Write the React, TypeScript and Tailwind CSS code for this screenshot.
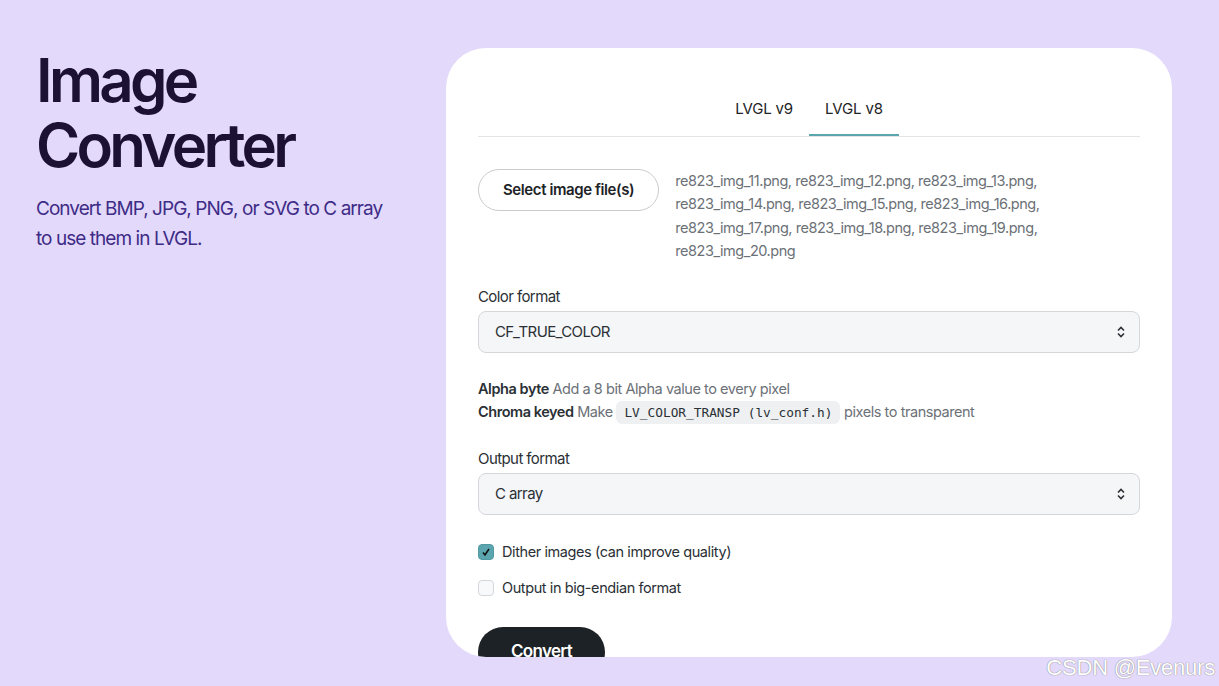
import { useState } from "react";

const FILES = [
  "re823_img_11.png",
  "re823_img_12.png",
  "re823_img_13.png",
  "re823_img_14.png",
  "re823_img_15.png",
  "re823_img_16.png",
  "re823_img_17.png",
  "re823_img_18.png",
  "re823_img_19.png",
  "re823_img_20.png",
];

type Version = "v9" | "v8";

export default function App() {
  const [version, setVersion] = useState<Version>("v8");
  const [dither, setDither] = useState(true);
  const [bigEndian, setBigEndian] = useState(false);

  return (
    <div
      className="relative flex h-[686px] overflow-hidden bg-[#e3d9fb] pt-[48px] pl-[36px]"
      style={{ fontFamily: "Inter, 'Noto Sans', sans-serif" }}
    >
      <div className="w-[360px] shrink-0">
        <h1 className="text-[60px] font-semibold leading-[65px] tracking-[-0.062em] text-[#1c1133]">
          Image
          <br />
          Converter
        </h1>
        <p className="mt-4 text-[19px] leading-[30px] tracking-[-0.05em] text-[#3e2c86]">
          Convert BMP, JPG, PNG, or SVG to C array to use them in LVGL.
        </p>
      </div>

      <div className="ml-[50px] h-[609px] w-[726px] shrink-0 overflow-hidden rounded-[40px] bg-white px-8 pt-8">
        <div className="flex justify-center border-b border-[#e2e4e8]">
          <TabButton active={version === "v9"} onClick={() => setVersion("v9")}>
            LVGL v9
          </TabButton>
          <TabButton active={version === "v8"} onClick={() => setVersion("v8")}>
            LVGL v8
          </TabButton>
        </div>

        <div className="mt-8 flex items-start gap-4">
          <button className="shrink-0 rounded-full border border-[#c9cbce] px-6 py-[10px] text-[15px] font-semibold leading-5 tracking-[-0.027em] text-[#1d2326]">
            Select image file(s)
          </button>
          <p className="flex-1 text-[14.5px] leading-[23.3px] tracking-[-0.032em] text-[#6b7177]">
            {FILES.join(", ")}
          </p>
        </div>

        <Field label="Color format" value="CF_TRUE_COLOR" className="mt-6" />

        <div className="mt-6 text-[14.5px] leading-[23px] tracking-[-0.031em] text-[#6b7177]">
          <p>
            <span className="font-semibold text-[#2a3035]">Alpha byte</span> Add a 8 bit
            Alpha value to every pixel
          </p>
          <p>
            <span className="font-semibold text-[#2a3035]">Chroma keyed</span> Make{" "}
            <code className="rounded-md bg-[#eef0f2] px-2 py-[4px] font-['DejaVu_Sans_Mono',monospace] text-[12.8px] tracking-normal text-[#2a3035]">
              LV_COLOR_TRANSP (lv_conf.h)
            </code>{" "}
            pixels to transparent
          </p>
        </div>

        <Field label="Output format" value="C array" className="mt-6" />

        <div className="mt-[26px] flex flex-col gap-[14px]">
          <Checkbox checked={dither} onChange={() => setDither(!dither)}>
            Dither images (can improve quality)
          </Checkbox>
          <Checkbox checked={bigEndian} onChange={() => setBigEndian(!bigEndian)}>
            Output in big-endian format
          </Checkbox>
        </div>

        <button className="mt-7 h-[50px] rounded-full bg-[#1c2225] px-[33px] text-[17px] font-semibold tracking-[-0.04em] text-white">
          Convert
        </button>
      </div>

      <div
        className="absolute right-[4px] bottom-[7px] text-[22px] leading-none tracking-[-0.01em] text-white"
        style={{
          fontFamily: "'Liberation Sans', Arial, sans-serif",
          textShadow: "0 0 1px #8d8d8d, 0 0 1px #8d8d8d",
        }}
      >
        CSDN @Evenurs
      </div>
    </div>
  );
}

function TabButton({
  active,
  onClick,
  children,
}: {
  active: boolean;
  onClick: () => void;
  children: React.ReactNode;
}) {
  return (
    <button
      onClick={onClick}
      className={`border-b-2 px-4 pt-[18px] pb-[14px] text-[15px] font-normal leading-[22px] tracking-[-0.01em] text-[#1d2326] ${
        active ? "border-[#5ba5ae]" : "border-transparent"
      }`}
    >
      {children}
    </button>
  );
}

function Field({
  label,
  value,
  className,
}: {
  label: string;
  value: string;
  className?: string;
}) {
  return (
    <div className={className}>
      <div className="mb-[3px] text-[15px] leading-[22px] tracking-[-0.039em] text-[#2a3035]">{label}</div>
      <div className="flex h-[42px] items-center justify-between rounded-lg border border-[#d4d6da] bg-[#f5f6f8] px-4 text-[15px] tracking-[-0.04em] text-[#2a3035]">
        <span>{value}</span>
        <svg width="8" height="12" viewBox="0 0 8 12" className="mr-[-2px]">
          <path d="M1 4.5 L4 1.5 L7 4.5" fill="none" stroke="#2a3035" strokeWidth="1.6" />
          <path d="M1 7.5 L4 10.5 L7 7.5" fill="none" stroke="#2a3035" strokeWidth="1.6" />
        </svg>
      </div>
    </div>
  );
}

function Checkbox({
  checked,
  onChange,
  children,
}: {
  checked: boolean;
  onChange: () => void;
  children: React.ReactNode;
}) {
  return (
    <label
      className="flex items-center gap-2 text-[14.5px] leading-[22px] tracking-[-0.028em] text-[#2a3035]"
      onClick={onChange}
    >
      <span
        className={`flex h-4 w-4 items-center justify-center rounded-[4px] border ${
          checked ? "border-[#4f99a2] bg-[#5aa5ae]" : "border-[#d4d6da] bg-[#f8f9fa]"
        }`}
      >
        {checked && (
          <svg width="10" height="10" viewBox="0 0 10 10">
            <path d="M2 5.5 L4 8 L8 2" fill="none" stroke="#111" strokeWidth="1.6" />
          </svg>
        )}
      </span>
      {children}
    </label>
  );
}
